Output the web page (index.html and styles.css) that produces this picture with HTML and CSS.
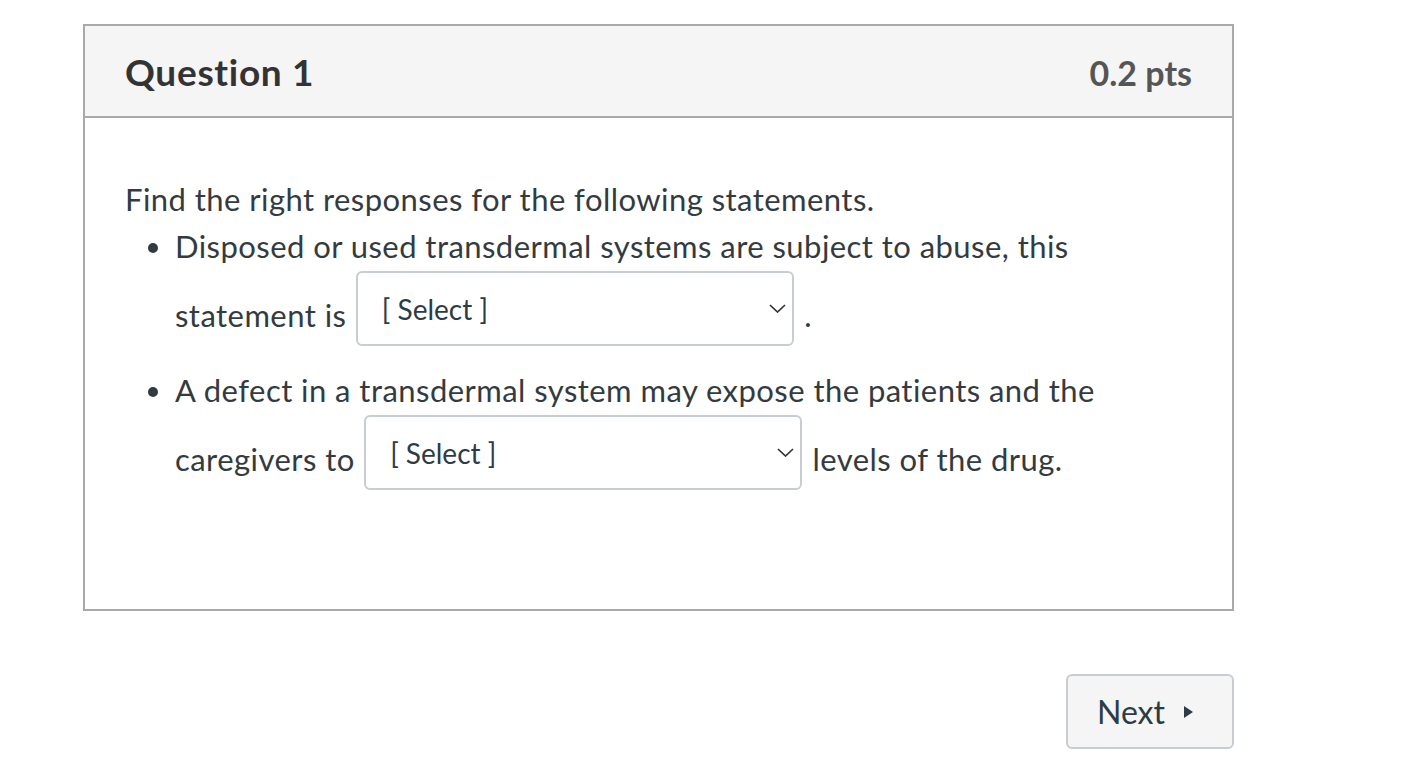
FILE: index.html
```html
<!DOCTYPE html>
<html lang="en">
<head>
<meta charset="utf-8">
<title>Question 1</title>
<link rel="stylesheet" href="styles.css">
</head>
<body>
<main class="page">
  <section class="question">
    <header class="question-header">
      <h2 class="question-title">Question 1</h2>
      <span class="points">0.2 pts</span>
    </header>
    <div class="question-body">
      <p class="prompt">Find the right responses for the following statements.</p>
      <ul class="statements">
        <li>Disposed or used transdermal systems are subject to abuse, this statement is <span class="select-wrap"><select class="select"><option>[ Select ]</option></select><svg class="chevron" viewBox="0 0 17 9" width="17" height="9"><path d="M1 1 L8.5 8 L16 1" fill="none" stroke="#333" stroke-width="1.7"/></svg></span> .</li>
        <li>A defect in a transdermal system may expose the patients and the caregivers to <span class="select-wrap"><select class="select"><option>[ Select ]</option></select><svg class="chevron" viewBox="0 0 17 9" width="17" height="9"><path d="M1 1 L8.5 8 L16 1" fill="none" stroke="#333" stroke-width="1.7"/></svg></span> levels of the drug.</li>
      </ul>
    </div>
  </section>
  <div class="actions">
    <button class="next-btn" type="button">Next <svg class="next-arrow" viewBox="0 0 9 12" width="9" height="12"><path d="M0 0 L9 6 L0 12 Z" fill="#2d3b45"/></svg></button>
  </div>
</main>
</body>
</html>
```

FILE: styles.css
```css
html, body {
  margin: 0;
  padding: 0;
  background: #ffffff;
}

body {
  font-family: Lato, "Open Sans", "Liberation Sans", sans-serif;
  color: #2d3b45;
}

.page {
  width: 1151px;
  margin-left: 83px;
  padding-top: 24px;
  display: flex;
  flex-direction: column;
}

.question {
  border: 2px solid #a9a9a9;
  background: #ffffff;
}

.question-header {
  height: 90px;
  background: #f5f5f5;
  border-bottom: 2px solid #a9a9a9;
  display: flex;
  align-items: center;
  justify-content: space-between;
  padding: 0 40px;
}

.question-title {
  margin: 0;
  font-size: 37px;
  font-weight: 700;
  letter-spacing: 0.7px;
  color: #333333;
}

.points {
  font-size: 34px;
  font-weight: 700;
  color: #555555;
  padding-top: 2px;
}

.question-body {
  padding: 58px 40px 98px 40px;
  font-size: 31px;
  line-height: 47px;
  letter-spacing: 0.45px;
  color: #333b40;
}

.prompt {
  margin: 0;
}

.statements {
  margin: 0;
  padding-left: 50px;
  list-style: disc;
}

.select-wrap {
  position: relative;
  display: inline-block;
  vertical-align: 7px;
  margin: 1px 2px 21px 1px;
  letter-spacing: 0;
}

.select {
  appearance: none;
  -webkit-appearance: none;
  display: block;
  width: 438px;
  height: 75px;
  box-sizing: border-box;
  border: 2px solid #c7cdd1;
  border-radius: 6px;
  background: #ffffff;
  padding: 0 40px 0 24px;
  font-family: Lato, "Open Sans", "Liberation Sans", sans-serif;
  font-size: 28px;
  color: #2d3b45;
}

.chevron {
  position: absolute;
  right: 8px;
  top: 33px;
  pointer-events: none;
}

.actions {
  display: flex;
  justify-content: flex-end;
  padding-top: 63px;
}

.next-btn {
  height: 75px;
  box-sizing: border-box;
  padding: 0 39px 0 29px;
  background: #f5f5f5;
  border: 2px solid #c7cdd1;
  border-radius: 6px;
  font-family: Lato, "Open Sans", "Liberation Sans", sans-serif;
  font-size: 32px;
  color: #2d3b45;
  display: flex;
  align-items: center;
  gap: 19px;
}

.next-arrow {
  display: block;
}
```
